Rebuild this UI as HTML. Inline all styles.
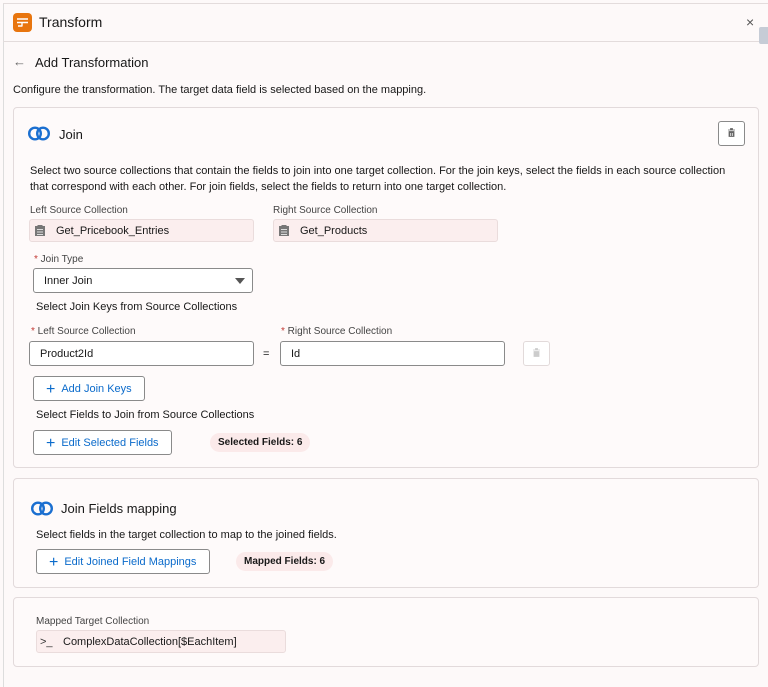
<!DOCTYPE html>
<html><head><style>
*{box-sizing:border-box;margin:0;padding:0}
body{width:768px;height:687px;background:#fdf9f9;font-family:"Liberation Sans",sans-serif;color:#181818;position:relative;overflow:hidden;font-size:11px}
.a{position:absolute}
.card{position:absolute;border:1px solid #e2dadb;border-radius:4px;background:#fefafa}
.lbl{position:absolute;font-size:10px;color:#444}
.ro{position:absolute;background:#fbeeee;border:1px solid #eadcdc;border-radius:3px;height:23px;font-size:11px;line-height:23px}
.inp{position:absolute;background:#fff;border:1px solid #8a8a8a;border-radius:3px;height:25px;font-size:11px;line-height:25px;padding-left:10px}
.btn{position:absolute;background:#fff;border:1px solid #8a8a8a;border-radius:3px;height:25px;font-size:11px;line-height:25px;color:#0b6bcb;padding-left:12px}
.btn b{font-weight:normal;font-size:16px;vertical-align:-2px;margin-right:6px}
.pill{position:absolute;background:#fbeaea;border-radius:10px;height:19px;font-size:10px;font-weight:bold;line-height:20px;padding:0 8px}
.req{color:#c23934}
</style></head><body>
<div class="a" style="left:3px;top:3px;width:1px;height:684px;background:#ddd"></div>
<div class="a" style="left:3px;top:3px;width:765px;height:1px;background:#e3dcdc"></div>
<div class="a" style="left:3px;top:41px;width:765px;height:1px;background:#e3dcdc"></div>
<div class="a" style="left:13px;top:13px;width:19px;height:19px;background:#e8750e;border-radius:4px">
<svg width="19" height="19" viewBox="0 0 19 19"><path d="M4 6h11M4 9.5h11M9 9.5v4M5 13h4" stroke="#fff" stroke-width="1.4" fill="none"/></svg></div>
<div class="a" style="left:39px;top:14px;font-size:14px">Transform</div>
<div class="a" style="left:746px;top:14px;font-size:14px;color:#555">×</div>
<div class="a" style="left:759px;top:27px;width:9px;height:17px;background:#c6ccd6;border-radius:2px 0 0 2px"></div>
<div class="a" style="left:13px;top:54px;font-size:13px;color:#666">←</div>
<div class="a" style="left:35px;top:55px;font-size:13px">Add Transformation</div>
<div class="a" style="left:13px;top:84px;font-size:11px">Configure the transformation. The target data field is selected based on the mapping.</div>

<div class="card" style="left:13px;top:107px;width:746px;height:361px"></div>
<svg class="a" style="left:27px;top:126px" width="25" height="15"><circle cx="8" cy="7.5" r="5.8" fill="none" stroke="#1b6fd0" stroke-width="2.4"/><circle cx="16" cy="7.5" r="5.8" fill="none" stroke="#1b6fd0" stroke-width="2.4"/></svg>
<div class="a" style="left:59px;top:127px;font-size:13px">Join</div>
<div class="a" style="left:718px;top:121px;width:27px;height:25px;border:1px solid #8a8a8a;border-radius:3px;background:#fff"><svg width="25" height="23"><path d="M9 8h7M11.5 8v-1.5h2V8M10 9.5h5v5h-5z" fill="#666" stroke="#666" stroke-width="0.8"/><path d="M11.7 11v3M13.3 11v3" stroke="#fff" stroke-width="0.7"/></svg></div>
<div class="a" style="left:30px;top:164px;font-size:11px;line-height:15.5px;width:705px">Select two source collections that contain the fields to join into one target collection. For the join keys, select the fields in each source collection that correspond with each other. For join fields, select the fields to return into one target collection.</div>
<div class="lbl" style="left:30px;top:205px">Left Source Collection</div>
<div class="lbl" style="left:273px;top:205px">Right Source Collection</div>
<div class="ro" style="left:29px;top:219px;width:225px;padding-left:26px">Get_Pricebook_Entries</div>
<div class="ro" style="left:273px;top:219px;width:225px;padding-left:26px">Get_Products</div>
<svg class="a" style="left:34px;top:224px" width="12" height="13"><rect x="1" y="2" width="10" height="10" fill="#777"/><rect x="3.5" y="1" width="5" height="2" fill="#777"/><path d="M3 5.5h6M3 8h6M3 10.5h6" stroke="#fff" stroke-width="0.8"/></svg>
<svg class="a" style="left:278px;top:224px" width="12" height="13"><rect x="1" y="2" width="10" height="10" fill="#777"/><rect x="3.5" y="1" width="5" height="2" fill="#777"/><path d="M3 5.5h6M3 8h6M3 10.5h6" stroke="#fff" stroke-width="0.8"/></svg>
<div class="lbl" style="left:34px;top:254px"><span class="req">*</span> Join Type</div>
<div class="inp" style="left:33px;top:268px;width:220px">Inner Join</div>
<div class="a" style="left:235px;top:278px;width:0;height:0;border-left:5px solid transparent;border-right:5px solid transparent;border-top:6px solid #555"></div>
<div class="a" style="left:36px;top:301px;font-size:11px">Select Join Keys from Source Collections</div>
<div class="lbl" style="left:31px;top:326px"><span class="req">*</span> Left Source Collection</div>
<div class="lbl" style="left:281px;top:326px"><span class="req">*</span> Right Source Collection</div>
<div class="inp" style="left:29px;top:341px;width:225px">Product2Id</div>
<div class="a" style="left:263px;top:348px;font-size:11px">=</div>
<div class="inp" style="left:280px;top:341px;width:225px">Id</div>
<div class="a" style="left:523px;top:341px;width:27px;height:25px;border:1px solid #e2dada;border-radius:3px;background:#fff"><svg width="25" height="23"><path d="M9 8h7M11.5 8v-1.5h2V8M10 9.5h5v5h-5z" fill="#ccc" stroke="#ccc" stroke-width="0.8"/></svg></div>
<div class="btn" style="left:33px;top:376px;width:112px"><b>+</b>Add Join Keys</div>
<div class="a" style="left:36px;top:409px;font-size:11px">Select Fields to Join from Source Collections</div>
<div class="btn" style="left:33px;top:430px;width:139px"><b>+</b>Edit Selected Fields</div>
<div class="pill" style="left:210px;top:433px">Selected Fields: 6</div>

<div class="card" style="left:13px;top:478px;width:746px;height:110px"></div>
<svg class="a" style="left:30px;top:501px" width="25" height="15"><circle cx="8" cy="7.5" r="5.8" fill="none" stroke="#1b6fd0" stroke-width="2.4"/><circle cx="16" cy="7.5" r="5.8" fill="none" stroke="#1b6fd0" stroke-width="2.4"/></svg>
<div class="a" style="left:61px;top:501px;font-size:13px">Join Fields mapping</div>
<div class="a" style="left:36px;top:529px;font-size:11px">Select fields in the target collection to map to the joined fields.</div>
<div class="btn" style="left:36px;top:549px;width:174px"><b>+</b>Edit Joined Field Mappings</div>
<div class="pill" style="left:236px;top:552px">Mapped Fields: 6</div>

<div class="card" style="left:13px;top:597px;width:746px;height:70px"></div>
<div class="lbl" style="left:36px;top:616px">Mapped Target Collection</div>
<div class="ro" style="left:36px;top:630px;width:250px;padding-left:26px">ComplexDataCollection[$EachItem]</div>
<div class="a" style="left:40px;top:636px;font-size:11px;color:#333">&gt;_</div>
</body></html>
